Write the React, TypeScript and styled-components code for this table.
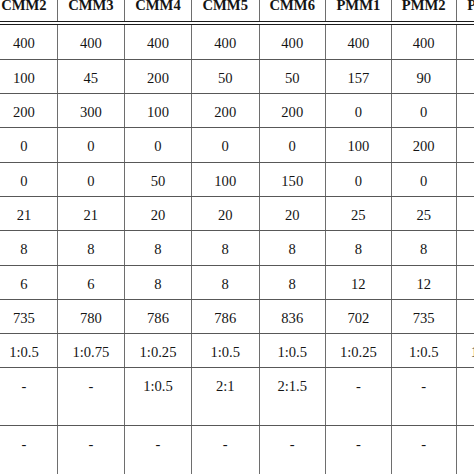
import React from "react";
import styled, { createGlobalStyle } from "styled-components";

const Global = createGlobalStyle`
  html, body { margin: 0; padding: 0; background: #ffffff; }
  body { font-family: "Liberation Serif", "Times New Roman", serif; }
`;

const COLS = [66.5, 67.3, 67, 67.5, 66.5, 65.7, 65, 66];

const Viewport = styled.div`
  width: 474px;
  height: 474px;
  overflow: hidden;
  background: #fff;
`;

const Table = styled.div`
  display: flex;
  flex-direction: column;
  margin-left: -8.8px;
  margin-top: -13px;
  width: max-content;
`;

const Row = styled.div<{ $h: number; $head?: boolean }>`
  display: grid;
  grid-template-columns: ${COLS.map((c) => `${c}px`).join(" ")};
  height: ${(p) => p.$h}px;
  box-sizing: border-box;
  border-bottom: ${(p) => (p.$head ? "4px double #1c1c1c" : "1px solid #585858")};
`;

const Cell = styled.div<{ $head?: boolean }>`
  box-sizing: border-box;
  border-right: 1px solid #6e6e6e;
  display: flex;
  justify-content: center;
  align-items: flex-start;
  padding-top: 10px;
  font-size: 14.6px;
  line-height: 17px;
  color: #141414;
  font-weight: ${(p) => (p.$head ? 700 : 400)};
  white-space: nowrap;
`;

const header = ["CMM2", "CMM3", "CMM4", "CMM5", "CMM6", "PMM1", "PMM2", "PMM3"];

const rows: { h: number; v: string[] }[] = [
  { h: 35.3, v: ["400", "400", "400", "400", "400", "400", "400", "400"] },
  { h: 34.4, v: ["100", "45", "200", "50", "50", "157", "90", "120"] },
  { h: 34, v: ["200", "300", "100", "200", "200", "0", "0", "0"] },
  { h: 34.6, v: ["0", "0", "0", "0", "0", "100", "200", "250"] },
  { h: 34, v: ["0", "0", "50", "100", "150", "0", "0", "0"] },
  { h: 34.4, v: ["21", "21", "20", "20", "20", "25", "25", "25"] },
  { h: 34.6, v: ["8", "8", "8", "8", "8", "8", "8", "8"] },
  { h: 34.4, v: ["6", "6", "8", "8", "8", "12", "12", "12"] },
  { h: 34, v: ["735", "780", "786", "786", "836", "702", "735", "760"] },
  { h: 34, v: ["1:0.5", "1:0.75", "1:0.25", "1:0.5", "1:0.5", "1:0.25", "1:0.5", "1:0.25"] },
  { h: 57.6, v: ["-", "-", "1:0.5", "2:1", "2:1.5", "-", "-", "-"] },
  { h: 57.6, v: ["-", "-", "-", "-", "-", "-", "-", "-"] },
];

export default function App() {
  return (
    <Viewport>
      <Global />
      <Table>
        <Row $h={37.5} $head>
          {header.map((h) => (
            <Cell key={h} $head>
              {h}
            </Cell>
          ))}
        </Row>
        {rows.map((r, i) => (
          <Row key={i} $h={r.h}>
            {r.v.map((v, j) => (
              <Cell key={j}>{v}</Cell>
            ))}
          </Row>
        ))}
      </Table>
    </Viewport>
  );
}
